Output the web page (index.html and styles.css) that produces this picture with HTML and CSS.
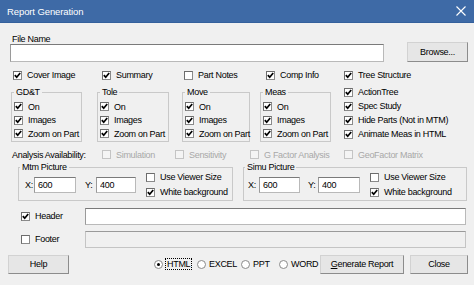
FILE: index.html
```html
<!DOCTYPE html>
<html lang="en">
<head>
    <meta charset="UTF-8">
    <title>Report Generation</title>
    <link rel="stylesheet" href="styles.css">
</head>
<body>
    <div class="window">
        <div class="titlebar">
            <span>Report Generation</span>
            <svg class="close" width="10" height="10" viewBox="0 0 10 10"><path d="M0.5 0.5L9.5 9.5M9.5 0.5L0.5 9.5" stroke="#fff" stroke-width="1.1"/></svg>
        </div>

        <div class="file-label">File Name</div>
        <div class="file-row">
            <input class="text-input file-input" type="text">
            <button class="btn browse">Browse...</button>
        </div>

        <div class="options">
            <!-- first row -->
            <label class="chk in2"><span class="box"><svg viewBox="0 0 7 7"><path d="M0.8 3.2L2.7 5.2L6.2 1"/></svg></span>Cover Image</label>
            <label class="chk in5"><span class="box"><svg viewBox="0 0 7 7"><path d="M0.8 3.2L2.7 5.2L6.2 1"/></svg></span>Summary</label>
            <label class="chk in2"><span class="box"></span>Part Notes</label>
            <label class="chk in6"><span class="box"><svg viewBox="0 0 7 7"><path d="M0.8 3.2L2.7 5.2L6.2 1"/></svg></span>Comp Info</label>
            <label class="chk"><span class="box"><svg viewBox="0 0 7 7"><path d="M0.8 3.2L2.7 5.2L6.2 1"/></svg></span>Tree Structure</label>

            <!-- second row -->
            <fieldset class="group w71">
                <legend>GD&amp;T</legend>
                <label class="chk"><span class="box"><svg viewBox="0 0 7 7"><path d="M0.8 3.2L2.7 5.2L6.2 1"/></svg></span>On</label>
                <label class="chk"><span class="box"><svg viewBox="0 0 7 7"><path d="M0.8 3.2L2.7 5.2L6.2 1"/></svg></span>Images</label>
                <label class="chk"><span class="box"><svg viewBox="0 0 7 7"><path d="M0.8 3.2L2.7 5.2L6.2 1"/></svg></span>Zoom on Part</label>
            </fieldset>
            <fieldset class="group w72">
                <legend>Tole</legend>
                <label class="chk"><span class="box"><svg viewBox="0 0 7 7"><path d="M0.8 3.2L2.7 5.2L6.2 1"/></svg></span>On</label>
                <label class="chk"><span class="box"><svg viewBox="0 0 7 7"><path d="M0.8 3.2L2.7 5.2L6.2 1"/></svg></span>Images</label>
                <label class="chk"><span class="box"><svg viewBox="0 0 7 7"><path d="M0.8 3.2L2.7 5.2L6.2 1"/></svg></span>Zoom on Part</label>
            </fieldset>
            <fieldset class="group w68">
                <legend>Move</legend>
                <label class="chk"><span class="box"><svg viewBox="0 0 7 7"><path d="M0.8 3.2L2.7 5.2L6.2 1"/></svg></span>On</label>
                <label class="chk"><span class="box"><svg viewBox="0 0 7 7"><path d="M0.8 3.2L2.7 5.2L6.2 1"/></svg></span>Images</label>
                <label class="chk"><span class="box"><svg viewBox="0 0 7 7"><path d="M0.8 3.2L2.7 5.2L6.2 1"/></svg></span>Zoom on Part</label>
            </fieldset>
            <fieldset class="group w71">
                <legend>Meas</legend>
                <label class="chk"><span class="box"><svg viewBox="0 0 7 7"><path d="M0.8 3.2L2.7 5.2L6.2 1"/></svg></span>On</label>
                <label class="chk"><span class="box"><svg viewBox="0 0 7 7"><path d="M0.8 3.2L2.7 5.2L6.2 1"/></svg></span>Images</label>
                <label class="chk"><span class="box"><svg viewBox="0 0 7 7"><path d="M0.8 3.2L2.7 5.2L6.2 1"/></svg></span>Zoom on Part</label>
            </fieldset>
            <div class="side">
                <label class="chk"><span class="box"><svg viewBox="0 0 7 7"><path d="M0.8 3.2L2.7 5.2L6.2 1"/></svg></span>ActionTree</label>
                <label class="chk"><span class="box"><svg viewBox="0 0 7 7"><path d="M0.8 3.2L2.7 5.2L6.2 1"/></svg></span>Spec Study</label>
                <label class="chk"><span class="box"><svg viewBox="0 0 7 7"><path d="M0.8 3.2L2.7 5.2L6.2 1"/></svg></span>Hide Parts (Not in MTM)</label>
                <label class="chk"><span class="box"><svg viewBox="0 0 7 7"><path d="M0.8 3.2L2.7 5.2L6.2 1"/></svg></span>Animate Meas in HTML</label>
            </div>
        </div>

        <div class="analysis">
            <span>Analysis Availability:</span>
            <label class="chk disabled"><span class="box"></span>Simulation</label>
            <label class="chk disabled"><span class="box"></span>Sensitivity</label>
            <label class="chk disabled"><span class="box"></span>G Factor Analysis</label>
            <label class="chk disabled"><span class="box"></span>GeoFactor Matrix</label>
        </div>

        <div class="pictures">
            <fieldset class="pic mtm">
                <legend>Mtm Picture</legend>
                <div class="pic-body">
                    <span class="xy x">X:</span>
                    <input class="text-input size" type="text" value="600">
                    <span class="xy y">Y:</span>
                    <input class="text-input size" type="text" value="400">
                    <div class="pic-checks">
                        <label class="chk"><span class="box"></span>Use Viewer Size</label>
                        <label class="chk"><span class="box"><svg viewBox="0 0 7 7"><path d="M0.8 3.2L2.7 5.2L6.2 1"/></svg></span>White background</label>
                    </div>
                </div>
            </fieldset>
            <fieldset class="pic simu">
                <legend>Simu Picture</legend>
                <div class="pic-body">
                    <span class="xy x">X:</span>
                    <input class="text-input size" type="text" value="600">
                    <span class="xy y">Y:</span>
                    <input class="text-input size" type="text" value="400">
                    <div class="pic-checks">
                        <label class="chk"><span class="box"></span>Use Viewer Size</label>
                        <label class="chk"><span class="box"><svg viewBox="0 0 7 7"><path d="M0.8 3.2L2.7 5.2L6.2 1"/></svg></span>White background</label>
                    </div>
                </div>
            </fieldset>
        </div>

        <div class="hf-row">
            <label class="chk"><span class="box"><svg viewBox="0 0 7 7"><path d="M0.8 3.2L2.7 5.2L6.2 1"/></svg></span>Header</label>
            <input class="text-input hf-input" type="text">
        </div>
        <div class="hf-row footer">
            <label class="chk"><span class="box"></span>Footer</label>
            <input class="text-input hf-input" type="text" disabled>
        </div>

        <div class="actions">
            <button class="btn help">Help</button>
            <label class="radio r-html"><span class="dot on"></span><span class="focus">HTML</span></label>
            <label class="radio r-excel"><span class="dot"></span>EXCEL</label>
            <label class="radio r-ppt"><span class="dot"></span>PPT</label>
            <label class="radio r-word"><span class="dot"></span>WORD</label>
            <button class="btn generate"><u>G</u>enerate Report</button>
            <button class="btn closebtn">Close</button>
        </div>
    </div>
</body>
</html>
```

FILE: styles.css
```css
body {
    margin: 0;
    font-family: "Liberation Sans", Arial, sans-serif;
    font-size: 9px;
    letter-spacing: -0.3px;
    color: #000;
    background: #f0f0f0;
}
.window {
    width: 474px;
    height: 285px;
    overflow: hidden;
    background: #f0f0f0;
}
.titlebar {
    height: 23px;
    box-sizing: border-box;
    background: #3e6aa6;
    border-bottom: 1px solid #34609c;
    color: #fff;
    font-size: 9.5px;
    letter-spacing: -0.1px;
    display: flex;
    align-items: center;
    justify-content: space-between;
    padding: 0 8px 0 7px;
}
.file-label {
    margin: 11px 0 0 12px;
    line-height: 10px;
}
.file-row {
    display: flex;
    align-items: flex-start;
    margin-left: 10px;
}
.text-input {
    box-sizing: border-box;
    height: 18px;
    margin: 0;
    padding: 0 3px;
    border: 1px solid #b9b9b9;
    border-top-color: #7a7a7a;
    border-left-color: #9a9a9a;
    background: #fff;
    font: inherit;
    letter-spacing: inherit;
    color: #000;
    outline: none;
}
.file-input {
    width: 374px;
}
.btn {
    box-sizing: border-box;
    height: 20px;
    margin: 0;
    padding: 0;
    background: #e6e6e6;
    border: 1px solid #d2d2d2;
    border-right-color: #8c8c8c;
    border-bottom-color: #8c8c8c;
    font: inherit;
    letter-spacing: inherit;
    color: #000;
}
.btn u {
    text-decoration: underline;
}
.browse {
    width: 61px;
    height: 20px;
    margin: -2px 0 0 23px;
}

/* checkboxes */
.chk {
    display: flex;
    align-items: center;
    gap: 5px;
    height: 12px;
    white-space: nowrap;
}
.box {
    flex: none;
    width: 9px;
    height: 9px;
    box-sizing: border-box;
    border: 1px solid #8a8a8a;
    border-top-color: #6c6c6c;
    border-left-color: #6c6c6c;
    background: #fff;
    display: flex;
    align-items: center;
    justify-content: center;
}
.box svg {
    width: 7px;
    height: 7px;
    fill: none;
    stroke: #000;
    stroke-width: 1.7;
}
.chk.disabled {
    color: #a8a8a8;
}
.chk.disabled .box {
    border-color: #c4c4c4;
    background: #f4f4f4;
}

.options {
    display: grid;
    grid-template-columns: 86px 85px 78px 84px 1fr;
    row-gap: 4px;
    margin: 7px 0 0 11px;
}
.in2 { margin-left: 2px; }
.in5 { margin-left: 5px; }
.in6 { margin-left: 6px; }

.group {
    margin: 0;
    padding: 1px 0 0 2px;
    min-width: 0;
    border: 1px solid #c9c9c9;
}
.group legend {
    padding: 0 2px;
    line-height: 14px;
}
.group .chk {
    height: 13.5px;
}
.w71 { width: 71px; box-sizing: border-box; }
.w72 { width: 72px; box-sizing: border-box; }
.w68 { width: 68px; box-sizing: border-box; }

.side {
    display: flex;
    flex-direction: column;
}
.side .chk {
    height: 14px;
}

.analysis {
    display: grid;
    grid-template-columns: 90px 73px 75px 94px 1fr;
    align-items: center;
    height: 12px;
    margin: 7px 0 0 12px;
}

.pictures {
    display: flex;
    gap: 10px;
    margin-left: 18px;
}
.pic {
    margin: 0;
    padding: 0 0 0 1px;
    min-width: 0;
    box-sizing: border-box;
    border: 1px solid #c9c9c9;
}
.pic legend {
    padding: 0 2px;
    line-height: 13px;
}
.mtm { width: 215px; }
.simu { width: 224px; }
.pic-body {
    display: flex;
    align-items: center;
    height: 30px;
    margin-top: -4px;
}
.xy {
    flex: none;
}
.size {
    height: 16px;
}
.mtm .x { margin-left: 5px; width: 9px; }
.mtm .size:nth-of-type(1) { width: 42px; }
.mtm .y { margin-left: 9px; width: 11px; }
.mtm .size:nth-of-type(2) { width: 40px; }
.simu .x { margin-left: 3px; width: 11px; }
.simu .size:nth-of-type(1) { width: 41px; }
.simu .y { margin-left: 8px; width: 10px; }
.simu .size:nth-of-type(2) { width: 42px; }
.pic-checks {
    margin-left: 10px;
    display: flex;
    flex-direction: column;
}
.pic-checks .chk {
    height: 15px;
}

.hf-row {
    display: flex;
    align-items: center;
    height: 17px;
    margin: 7px 0 0 21px;
}
.hf-row.footer {
    margin-top: 6px;
}
.hf-row .chk {
    width: 64px;
}
.hf-input {
    width: 381px;
    height: 17px;
}
.hf-input:disabled {
    background: #f0f0f0;
    border-color: #c4c4c4;
    border-top-color: #9a9a9a;
}

.actions {
    display: flex;
    align-items: center;
    height: 19px;
    margin: 7px 0 0 8px;
}
.help {
    width: 61px;
    height: 19px;
    margin-right: 85px;
}
.radio {
    display: flex;
    align-items: center;
    gap: 3px;
    white-space: nowrap;
}
.r-html { width: 43px; }
.r-excel { width: 44px; }
.r-ppt { width: 38px; }
.r-word { width: 41px; }
.dot {
    flex: none;
    width: 9px;
    height: 9px;
    box-sizing: border-box;
    border: 1px solid #8a8a8a;
    border-radius: 50%;
    background: #fff;
    display: flex;
    align-items: center;
    justify-content: center;
}
.dot.on::after {
    content: "";
    width: 3px;
    height: 3px;
    border-radius: 50%;
    background: #000;
}
.focus {
    border: 1px dotted #000;
    padding: 0 1px;
    margin-left: -1px;
}
.generate {
    width: 84px;
    height: 19px;
}
.closebtn {
    width: 58px;
    height: 19px;
    margin-left: 6px;
}
```
